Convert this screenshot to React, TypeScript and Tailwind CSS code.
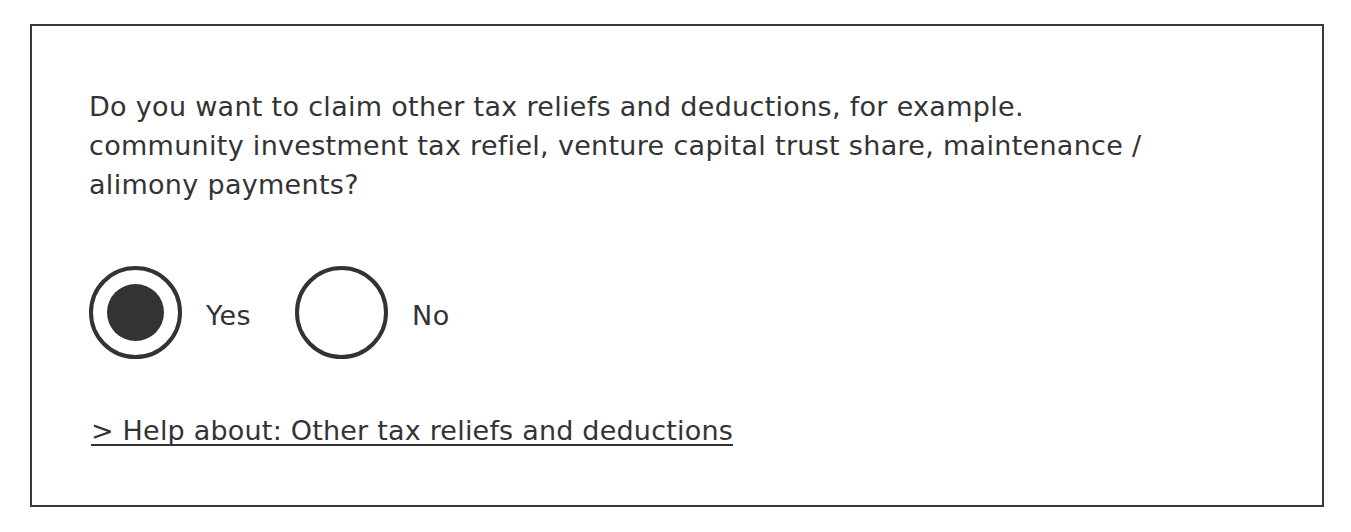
import React, { useState } from "react";

const options = ["Yes", "No"];

const App = () => {
  const [picked, setPicked] = useState<number>(0);

  return (
    <div className="w-[1351px] h-[532px] bg-white pt-[24px] pl-[30px] font-['DejaVu_Sans',sans-serif] text-[#333333]">
      <div className="w-[1294px] h-[483px] border-2 border-[#3a3a3a] pl-[57px] pt-[61px] flex flex-col">
        <p className="text-[27px] leading-[39px] tracking-[0.3px] w-[1180px]">
          Do you want to claim other tax reliefs and deductions, for example.
          <br />
          community investment tax refiel, venture capital trust share, maintenance /
          <br />
          alimony payments?
        </p>

        <div className="flex items-center mt-[62px]">
          {options.map((label, index) => (
            <label
              key={label}
              className="flex items-center cursor-pointer mr-[44px]"
              onClick={() => setPicked(index)}
            >
              <span className="w-[93px] h-[93px] rounded-full border-[4px] border-[#333333] flex items-center justify-center">
                {picked === index && (
                  <span className="w-[57px] h-[57px] rounded-full bg-[#333333]" />
                )}
              </span>
              <span className="ml-[24px] mt-[8px] text-[27px] tracking-[0.5px]">{label}</span>
            </label>
          ))}
        </div>

        <a
          href="#"
          className="mt-[52px] ml-[2px] text-[27px] leading-[39px] tracking-[0.2px] underline underline-offset-[4px] decoration-2 [text-decoration-skip-ink:none] self-start"
        >
          &gt; Help about: Other tax reliefs and deductions
        </a>
      </div>
    </div>
  );
};

export default App;
